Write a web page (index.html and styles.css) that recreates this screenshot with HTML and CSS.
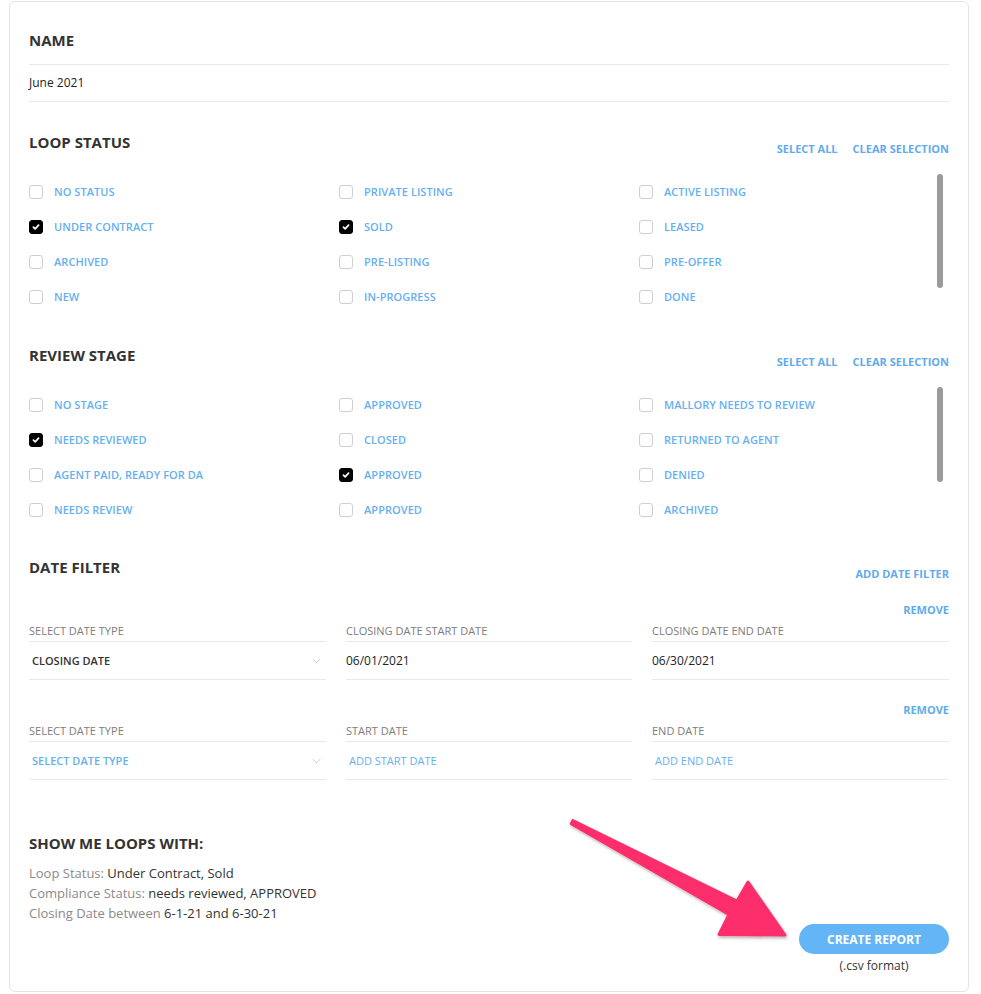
FILE: index.html
```html
<!DOCTYPE html>
<html>
<head>
<meta charset="utf-8">
<link rel="stylesheet" href="styles.css">
</head>
<body>
<div class="card">
  <section class="name-section">
    <h2 class="heading">NAME</h2>
    <div class="name-field">June 2021</div>
  </section>

  <section class="section">
    <div class="section-head">
      <h2 class="heading">LOOP STATUS</h2>
      <div class="actions"><a class="action">SELECT ALL</a><a class="action">CLEAR SELECTION</a></div>
    </div>
    <div class="list-wrap">
      <div class="check-grid">
        <label class="check"><span class="box"></span>NO STATUS</label>
        <label class="check"><span class="box"></span>PRIVATE LISTING</label>
        <label class="check"><span class="box"></span>ACTIVE LISTING</label>
        <label class="check"><span class="box on"><svg viewBox="0 0 14 14"><path d="M4 7.2l2 2 4-4.4"/></svg></span>UNDER CONTRACT</label>
        <label class="check"><span class="box on"><svg viewBox="0 0 14 14"><path d="M4 7.2l2 2 4-4.4"/></svg></span>SOLD</label>
        <label class="check"><span class="box"></span>LEASED</label>
        <label class="check"><span class="box"></span>ARCHIVED</label>
        <label class="check"><span class="box"></span>PRE-LISTING</label>
        <label class="check"><span class="box"></span>PRE-OFFER</label>
        <label class="check"><span class="box"></span>NEW</label>
        <label class="check"><span class="box"></span>IN-PROGRESS</label>
        <label class="check"><span class="box"></span>DONE</label>
      </div>
      <div class="scroll-track"><div class="scroll-thumb loop-thumb"></div></div>
    </div>
  </section>

  <section class="section review">
    <div class="section-head">
      <h2 class="heading">REVIEW STAGE</h2>
      <div class="actions"><a class="action">SELECT ALL</a><a class="action">CLEAR SELECTION</a></div>
    </div>
    <div class="list-wrap">
      <div class="check-grid">
        <label class="check"><span class="box"></span>NO STAGE</label>
        <label class="check"><span class="box"></span>APPROVED</label>
        <label class="check"><span class="box"></span>MALLORY NEEDS TO REVIEW</label>
        <label class="check"><span class="box on"><svg viewBox="0 0 14 14"><path d="M4 7.2l2 2 4-4.4"/></svg></span>NEEDS REVIEWED</label>
        <label class="check"><span class="box"></span>CLOSED</label>
        <label class="check"><span class="box"></span>RETURNED TO AGENT</label>
        <label class="check"><span class="box"></span>AGENT PAID, READY FOR DA</label>
        <label class="check"><span class="box on"><svg viewBox="0 0 14 14"><path d="M4 7.2l2 2 4-4.4"/></svg></span>APPROVED</label>
        <label class="check"><span class="box"></span>DENIED</label>
        <label class="check"><span class="box"></span>NEEDS REVIEW</label>
        <label class="check"><span class="box"></span>APPROVED</label>
        <label class="check"><span class="box"></span>ARCHIVED</label>
      </div>
      <div class="scroll-track"><div class="scroll-thumb review-thumb"></div></div>
    </div>
  </section>

  <section class="section">
    <div class="section-head">
      <h2 class="heading">DATE FILTER</h2>
      <div class="actions"><a class="action">ADD DATE FILTER</a></div>
    </div>

    <div class="filter">
      <div class="remove-row"><a class="action">REMOVE</a></div>
      <div class="filter-grid">
        <div class="field">
          <div class="field-label">SELECT DATE TYPE</div>
          <div class="field-input select"><span class="select-value">CLOSING DATE</span><svg class="chev" viewBox="0 0 10 6"><path d="M1 1l4 4 4-4"/></svg></div>
        </div>
        <div class="field">
          <div class="field-label">CLOSING DATE START DATE</div>
          <div class="field-input"><span class="date-value">06/01/2021</span></div>
        </div>
        <div class="field">
          <div class="field-label">CLOSING DATE END DATE</div>
          <div class="field-input"><span class="date-value">06/30/2021</span></div>
        </div>
      </div>
    </div>

    <div class="filter second">
      <div class="remove-row"><a class="action">REMOVE</a></div>
      <div class="filter-grid">
        <div class="field">
          <div class="field-label">SELECT DATE TYPE</div>
          <div class="field-input select"><span class="select-placeholder">SELECT DATE TYPE</span><svg class="chev" viewBox="0 0 10 6"><path d="M1 1l4 4 4-4"/></svg></div>
        </div>
        <div class="field">
          <div class="field-label">START DATE</div>
          <div class="field-input"><span class="date-placeholder">ADD START DATE</span></div>
        </div>
        <div class="field">
          <div class="field-label">END DATE</div>
          <div class="field-input"><span class="date-placeholder">ADD END DATE</span></div>
        </div>
      </div>
    </div>
  </section>

  <section class="footer">
    <div class="summary">
      <h2 class="heading">SHOW ME LOOPS WITH:</h2>
      <p class="summary-line"><span class="muted">Loop Status:</span> Under Contract, Sold</p>
      <p class="summary-line"><span class="muted">Compliance Status:</span> needs reviewed, APPROVED</p>
      <p class="summary-line"><span class="muted">Closing Date between</span> 6-1-21 and 6-30-21</p>
    </div>
    <div class="create">
      <button class="create-btn">CREATE REPORT</button>
      <div class="csv-note">(.csv format)</div>
    </div>
  </section>
</div>

<svg class="annotation" width="981" height="994" viewBox="0 0 981 994">
  <defs>
    <filter id="sh" x="-20%" y="-20%" width="140%" height="140%">
      <feDropShadow dx="1" dy="2" stdDeviation="1.8" flood-color="#000" flood-opacity="0.28"/>
    </filter>
  </defs>
  <polygon filter="url(#sh)" fill="#fd2d6c" stroke="#fd2d6c" stroke-width="3" stroke-linejoin="round"
    points="572.8,820.6 737,901 748,882 785,935 719,934.5 729,914.5 571.2,823.6"/>
</svg>
</body>
</html>
```

FILE: styles.css
```css
html, body {
  margin: 0;
  padding: 0;
  background: #ffffff;
}

body {
  font-family: "Open Sans", "Noto Sans", "Liberation Sans", sans-serif;
  color: #333333;
  position: relative;
  width: 981px;
  height: 994px;
  overflow: hidden;
}

.card {
  box-sizing: border-box;
  width: 960px;
  margin: 1px 0 0 9px;
  border: 1px solid #e4e4e4;
  border-radius: 6px;
  padding: 28px 19px 18px;
  height: 991px;
}

.heading {
  margin: 0;
  font-size: 15px;
  line-height: 20px;
  font-weight: 700;
  color: #333333;
}

.name-section .heading {
  margin-bottom: 14px;
}

.name-field {
  border-top: 1px solid #e9e9e9;
  border-bottom: 1px solid #e9e9e9;
  height: 36px;
  line-height: 36px;
  font-size: 12px;
  color: #222222;
}

.section {
  margin-top: 30px;
}

.section .actions {
  margin-top: 10px;
}

.section.review {
  margin-top: 31px;
}

.section-head {
  display: flex;
  justify-content: space-between;
  align-items: flex-start;
}

.actions {
  display: flex;
  gap: 15px;
}

.action {
  font-size: 11px;
  line-height: 14px;
  font-weight: 700;
  color: #5fabee;
  cursor: pointer;
}

.list-wrap {
  display: flex;
  margin-top: 18px;
}

.check-grid {
  flex: 1;
  display: grid;
  grid-template-columns: 310px 300px 1fr;
  grid-auto-rows: 35px;
}

.check {
  display: flex;
  align-items: center;
  gap: 11px;
  font-size: 11px;
  font-weight: 600;
  color: #66b0f0;
  letter-spacing: 0.05px;
}

.box {
  box-sizing: border-box;
  width: 14px;
  height: 14px;
  border: 1px solid #cfcfcf;
  border-radius: 3px;
  background: #fff;
  flex: none;
  display: flex;
  align-items: center;
  justify-content: center;
}

.box.on {
  background: #000;
  border-color: #000;
}

.box svg {
  width: 14px;
  height: 14px;
}

.box svg path {
  fill: none;
  stroke: #fff;
  stroke-width: 2;
  stroke-linecap: round;
  stroke-linejoin: round;
}

.scroll-track {
  width: 6px;
  margin-right: 6px;
  flex: none;
}

.scroll-thumb {
  width: 6px;
  border-radius: 3px;
  background: #9b9b9b;
}

.loop-thumb {
  height: 114px;
}

.review-thumb {
  height: 95px;
}

.filter .remove-row {
  display: flex;
  justify-content: flex-end;
  margin-top: 22px;
}

.filter.second .remove-row {
  margin-top: 23px;
}

.filter-grid {
  display: grid;
  grid-template-columns: 297px 286px 1fr;
  column-gap: 20px;
  margin-top: 6px;
}

.field-label {
  font-size: 11px;
  line-height: 16px;
  color: #7d7d7d;
  height: 18px;
}

.field-input {
  box-sizing: content-box;
  height: 37px;
  border-top: 1px solid #e9e9e9;
  border-bottom: 1px solid #e9e9e9;
  display: flex;
  align-items: center;
}

.select {
  justify-content: space-between;
  padding: 0 3px;
}

.select-value {
  font-size: 11px;
  font-weight: 600;
  color: #333;
}

.select-placeholder {
  font-size: 11px;
  font-weight: 600;
  color: #66b0f0;
}

.chev {
  width: 9px;
  height: 6px;
  margin-right: 2px;
}

.chev path {
  fill: none;
  stroke: #c4c4c4;
  stroke-width: 1;
}

.date-value {
  font-size: 12px;
  color: #222;
}

.date-placeholder {
  font-size: 11px;
  color: #66b0f0;
  padding-left: 3px;
}

.footer {
  display: flex;
  justify-content: space-between;
  align-items: flex-start;
  margin-top: 53px;
}

.summary .heading {
  margin-bottom: 10px;
}

.summary-line {
  margin: 0;
  font-size: 13px;
  line-height: 20px;
  color: #333;
}

.muted {
  color: #8a8a8a;
}

.create {
  margin-top: 91px;
  display: flex;
  flex-direction: column;
  align-items: center;
}

.create-btn {
  width: 150px;
  height: 30px;
  border: none;
  border-radius: 15px;
  background: #64b5f6;
  color: #fff;
  font-family: inherit;
  font-size: 12px;
  font-weight: 700;
  padding: 0;
}

.csv-note {
  font-size: 12px;
  line-height: 16px;
  margin-top: 4px;
  color: #333;
}

.annotation {
  position: absolute;
  left: 0;
  top: 0;
  pointer-events: none;
}
```
